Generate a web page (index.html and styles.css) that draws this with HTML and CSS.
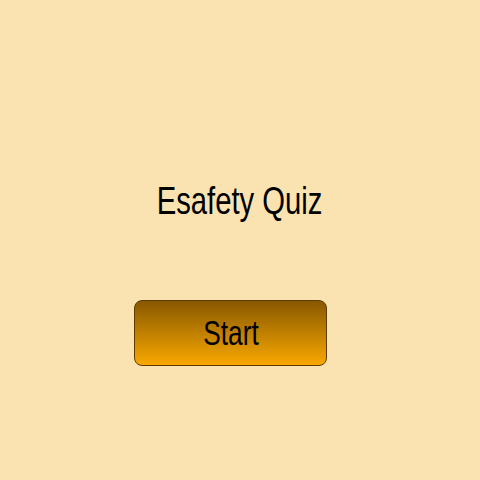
FILE: index.html
```html
<!DOCTYPE html>
<html>
<head>
<meta charset="utf-8">
<link rel="stylesheet" href="styles.css">
</head>
<body>
<main class="page">
  <h1 class="title"><span class="narrow">Esafety Quiz</span></h1>
  <button class="start"><span class="narrow">Start</span></button>
</main>
</body>
</html>
```

FILE: styles.css
```css
html, body {
  margin: 0;
  padding: 0;
  background: #fae3b0;
}
.page {
  width: 480px;
  height: 480px;
  display: flex;
  flex-direction: column;
  align-items: flex-start;
  padding-top: 178px;
  box-sizing: border-box;
  font-family: "Liberation Sans", Arial, sans-serif;
}
.title {
  margin: 0;
  width: 100%;
  text-align: center;
  font-size: 39px;
  line-height: 45px;
  font-weight: normal;
  color: #000;
}
.narrow {
  display: inline-block;
  transform: scaleX(0.75);
}
.start {
  margin: 77px 0 0 134px;
  width: 193px;
  height: 66px;
  box-sizing: border-box;
  border: 1px solid #5c3c00;
  border-radius: 8px;
  background: linear-gradient(to bottom, #885800, #f8a800);
  font-family: "Liberation Sans", Arial, sans-serif;
  font-size: 35px;
  color: #000;
  padding: 0;
  display: flex;
  align-items: center;
  justify-content: center;
}
```
